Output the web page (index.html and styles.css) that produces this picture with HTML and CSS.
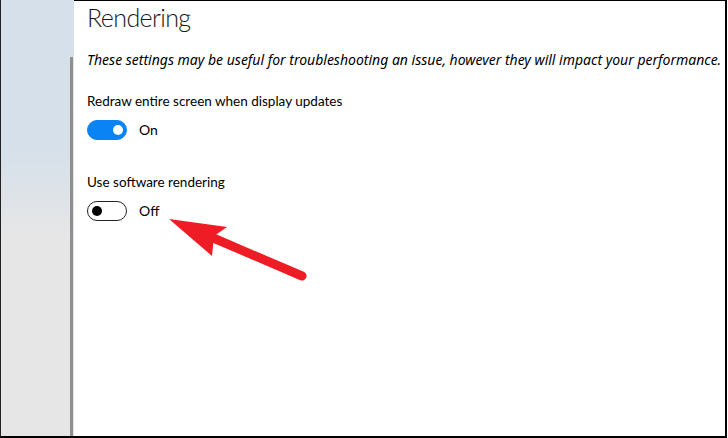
FILE: index.html
```html
<!DOCTYPE html>
<html lang="en">
  <head>
    <title>Settings - Rendering</title>
    <link rel="stylesheet" href="styles.css">
  </head>
  <body>
    <div class="window">
      <div class="sidebar"></div>
      <div class="scroll-track"><div class="scroll-thumb"></div></div>

      <div class="content">
        <h1>Rendering</h1>
        <p class="note">These settings may be useful for troubleshooting an issue, however they will impact your performance.</p>

        <div class="setting">
          <div class="setting-label">Redraw entire screen when display updates</div>
          <div class="toggle-row">
            <span class="toggle on"><span class="knob"></span></span>
            <span class="toggle-text">On</span>
          </div>
        </div>

        <div class="setting">
          <div class="setting-label">Use software rendering</div>
          <div class="toggle-row">
            <span class="toggle"><span class="knob"></span></span>
            <span class="toggle-text">Off</span>
          </div>
        </div>
      </div>

      <!-- callout arrow pointing at the software rendering switch -->
      <svg class="callout" width="728" height="438" viewBox="0 0 728 438">
        <polygon points="169,219 227,227 214,236 212,256" fill="#ee1c25"/>
        <line x1="204" y1="234" x2="302" y2="276" stroke="#ee1c25" stroke-width="9" stroke-linecap="round"/>
      </svg>
    </div>
  </body>
</html>
```

FILE: styles.css
```css
* {
  box-sizing: border-box;
}
body {
  margin: 0;
  background: #fff;
  font-family: Lato, "Noto Sans", sans-serif;
  color: #000;
}
.window {
  position: relative;
  display: flex;
  width: 727px;
  height: 438px;
  border-left: 1px solid #222;
  border-right: 2px solid #000;
  border-bottom: 2px solid #000;
  background: #fff;
}
.sidebar {
  width: 69px;
  background: linear-gradient(#d6e0ea 0, #d6e0ea 150px, #e6e6e6 240px, #e6e6e6 100%);
}
.scroll-track {
  width: 4px;
  padding-top: 57px;
  background: linear-gradient(#d6e0ea 0, #d6e0ea 150px, #e6e6e6 240px, #e6e6e6 100%);
}
.scroll-thumb {
  height: 100%;
  border-left: 3px solid #8f8f8f;
  border-right: 1px solid #e4e4e4;
}
.content {
  flex: 1;
  border-top: 1px solid #000;
  padding-left: 13px;
}
h1 {
  margin: 0;
  font-family: Lato, sans-serif;
  font-weight: 300;
  font-size: 25px;
  letter-spacing: -0.6px;
  line-height: 32px;
  color: #1a1a1a;
}
.note {
  margin: 17px 0 0;
  font-family: "Noto Sans", sans-serif;
  font-style: italic;
  font-size: 14px;
  line-height: 20px;
}
.setting {
  margin-top: 21px;
}
.setting + .setting {
  margin-top: 32px;
}
.setting-label {
  font-size: 13.5px;
  line-height: 20px;
}
.toggle-row {
  display: flex;
  align-items: center;
  gap: 12px;
  margin-top: 9px;
}
.toggle {
  display: flex;
  align-items: center;
  flex: none;
  width: 40px;
  height: 20px;
  border: 1.5px solid #222;
  border-radius: 10px;
  padding: 0 3.5px;
}
.toggle .knob {
  width: 10px;
  height: 10px;
  border-radius: 50%;
  background: #000;
}
.toggle.on {
  border-color: #0a84f5;
  background: #0a84f5;
  justify-content: flex-end;
}
.toggle.on .knob {
  background: #fff;
}
.toggle-text {
  font-size: 14px;
  line-height: 20px;
}
.callout {
  position: absolute;
  top: 0;
  left: -1px;
  pointer-events: none;
}
```
